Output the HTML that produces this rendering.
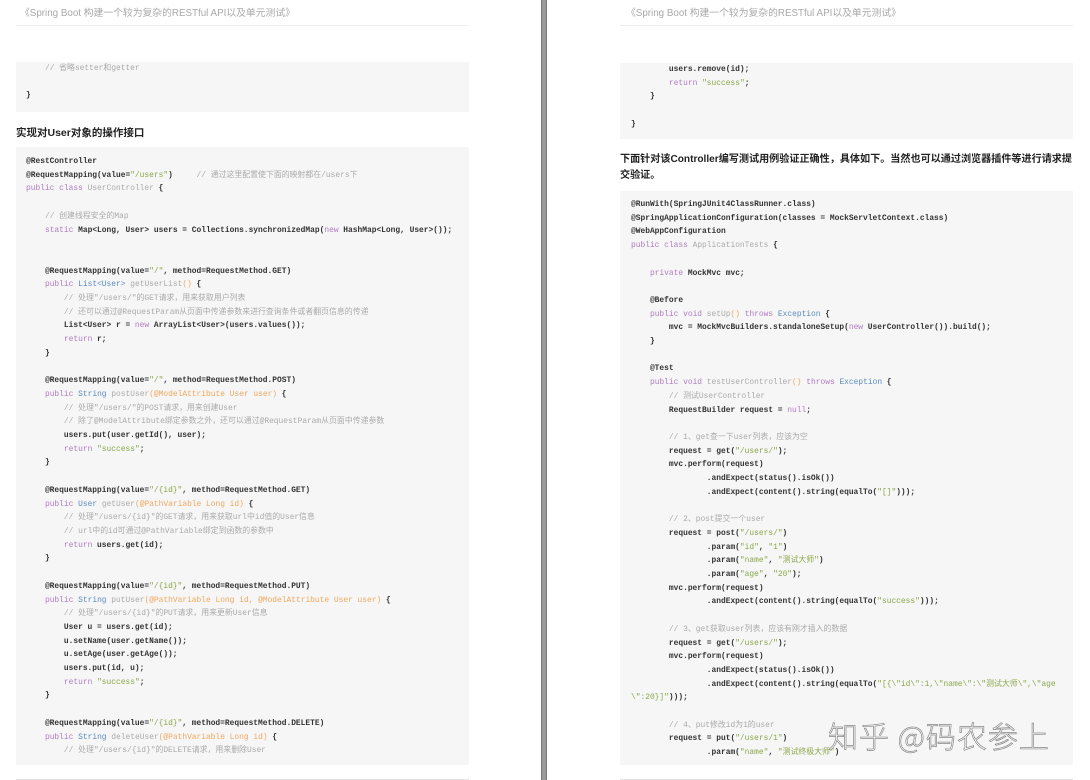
<!DOCTYPE html>
<html><head><meta charset="utf-8"><style>
*{margin:0;padding:0;box-sizing:border-box}
body{width:1090px;height:780px;background:#fff;position:relative;overflow:hidden;font-family:"Liberation Sans","Noto Sans CJK SC",sans-serif}
.hdr{position:absolute;top:5px;font-size:9.8px;color:#a8a8a8;white-space:nowrap}
.hl{position:absolute;top:25px;height:1px;background:#eee;width:453px}
.blk{position:absolute;background:#f6f6f6;width:453px}
pre{font-family:"Liberation Mono","Noto Sans CJK SC",monospace;font-size:7.9px;line-height:13.7px;color:#333;font-weight:bold;white-space:pre}
.k{color:#b07cc0;font-weight:normal}
.s{color:#8aa84a;font-weight:normal}
.c{color:#aaa;font-weight:normal}
.o{color:#f0a860;font-weight:normal}
.t{color:#5a8cc0;font-weight:normal}
.f{color:#aaa;font-weight:normal}
.div{position:absolute;left:541px;top:0;width:6px;height:780px;background:#9a9a9a;border-left:1px solid #777;border-right:1px solid #777}
.txt{position:absolute;font-size:10.5px;color:#222;line-height:16px;font-weight:bold;white-space:nowrap}
.bl{position:absolute;top:779px;height:1px;background:#e4e4e4;width:453px}
.wm{position:absolute;left:828px;top:713px;font-size:30px;color:#fff;-webkit-text-stroke:0.7px #888;letter-spacing:1px;white-space:nowrap;font-family:"Noto Sans CJK SC",sans-serif;font-weight:300}
</style></head><body>

<div class="hdr" style="left:20px">《Spring Boot 构建一个较为复杂的RESTful API以及单元测试》</div>
<div class="hl" style="left:16px"></div>
<div class="hdr" style="left:626px">《Spring Boot 构建一个较为复杂的RESTful API以及单元测试》</div>
<div class="hl" style="left:620px"></div>

<div class="div"></div>

<div class="blk" style="left:16px;top:62px;height:50px"><pre style="padding-left:10px">    <span class="c">// 省略setter和getter</span>

}</pre></div>

<div class="txt" style="left:16px;top:125px">实现对User对象的操作接口</div>

<div class="blk" style="left:16px;top:147px;height:618px"><pre style="padding:8px 0 0 10px">@RestController
@RequestMapping(value=<span class="s">"/users"</span>)     <span class="c">// 通过这里配置使下面的映射都在/users下</span>
<span class="k">public class</span> <span class="f">UserController</span> {

    <span class="c">// 创建线程安全的Map</span>
    <span class="k">static</span> Map&lt;Long, User&gt; users = Collections.synchronizedMap(<span class="k">new</span> HashMap&lt;Long, User&gt;());


    @RequestMapping(value=<span class="s">"/"</span>, method=RequestMethod.GET)
    <span class="k">public</span> <span class="t">List&lt;User&gt;</span> <span class="f">getUserList</span><span class="o">()</span> {
        <span class="c">// 处理"/users/"的GET请求，用来获取用户列表</span>
        <span class="c">// 还可以通过@RequestParam从页面中传递参数来进行查询条件或者翻页信息的传递</span>
        List&lt;User&gt; r = <span class="k">new</span> ArrayList&lt;User&gt;(users.values());
        <span class="k">return</span> r;
    }

    @RequestMapping(value=<span class="s">"/"</span>, method=RequestMethod.POST)
    <span class="k">public</span> <span class="t">String</span> <span class="f">postUser</span><span class="o">(@ModelAttribute User user)</span> {
        <span class="c">// 处理"/users/"的POST请求，用来创建User</span>
        <span class="c">// 除了@ModelAttribute绑定参数之外，还可以通过@RequestParam从页面中传递参数</span>
        users.put(user.getId(), user);
        <span class="k">return</span> <span class="s">"success"</span>;
    }

    @RequestMapping(value=<span class="s">"/{id}"</span>, method=RequestMethod.GET)
    <span class="k">public</span> <span class="t">User</span> <span class="f">getUser</span><span class="o">(@PathVariable Long id)</span> {
        <span class="c">// 处理"/users/{id}"的GET请求，用来获取url中id值的User信息</span>
        <span class="c">// url中的id可通过@PathVariable绑定到函数的参数中</span>
        <span class="k">return</span> users.get(id);
    }

    @RequestMapping(value=<span class="s">"/{id}"</span>, method=RequestMethod.PUT)
    <span class="k">public</span> <span class="t">String</span> <span class="f">putUser</span><span class="o">(@PathVariable Long id, @ModelAttribute User user)</span> {
        <span class="c">// 处理"/users/{id}"的PUT请求，用来更新User信息</span>
        User u = users.get(id);
        u.setName(user.getName());
        u.setAge(user.getAge());
        users.put(id, u);
        <span class="k">return</span> <span class="s">"success"</span>;
    }

    @RequestMapping(value=<span class="s">"/{id}"</span>, method=RequestMethod.DELETE)
    <span class="k">public</span> <span class="t">String</span> <span class="f">deleteUser</span><span class="o">(@PathVariable Long id)</span> {
        <span class="c">// 处理"/users/{id}"的DELETE请求，用来删除User</span></pre></div>
<div class="bl" style="left:16px"></div>

<div class="blk" style="left:620px;top:63px;height:76px"><pre style="padding:0 0 0 11px">        users.remove(id);
        <span class="k">return</span> <span class="s">"success"</span>;
    }

}</pre></div>

<div class="txt" style="left:620px;top:152px;font-size:10.1px">下面针对该Controller编写测试用例验证正确性，具体如下。当然也可以通过浏览器插件等进行请求提<br>交验证。</div>

<div class="blk" style="left:620px;top:191px;height:574px"><pre style="padding:7px 0 0 11px">@RunWith(SpringJUnit4ClassRunner.class)
@SpringApplicationConfiguration(classes = MockServletContext.class)
@WebAppConfiguration
<span class="k">public class</span> <span class="f">ApplicationTests</span> {

    <span class="k">private</span> MockMvc mvc;

    @Before
    <span class="k">public void</span> <span class="f">setUp</span><span class="o">()</span> <span class="k">throws</span> <span class="t">Exception</span> {
        mvc = MockMvcBuilders.standaloneSetup(<span class="k">new</span> UserController()).build();
    }

    @Test
    <span class="k">public void</span> <span class="f">testUserController</span><span class="o">()</span> <span class="k">throws</span> <span class="t">Exception</span> {
        <span class="c">// 测试UserController</span>
        RequestBuilder request = <span class="k">null</span>;

        <span class="c">// 1、get查一下user列表，应该为空</span>
        request = get(<span class="s">"/users/"</span>);
        mvc.perform(request)
                .andExpect(status().isOk())
                .andExpect(content().string(equalTo(<span class="s">"[]"</span>)));

        <span class="c">// 2、post提交一个user</span>
        request = post(<span class="s">"/users/"</span>)
                .param(<span class="s">"id"</span>, <span class="s">"1"</span>)
                .param(<span class="s">"name"</span>, <span class="s">"测试大师"</span>)
                .param(<span class="s">"age"</span>, <span class="s">"20"</span>);
        mvc.perform(request)
                .andExpect(content().string(equalTo(<span class="s">"success"</span>)));

        <span class="c">// 3、get获取user列表，应该有刚才插入的数据</span>
        request = get(<span class="s">"/users/"</span>);
        mvc.perform(request)
                .andExpect(status().isOk())
                .andExpect(content().string(equalTo(<span class="s">"[{\"id\":1,\"name\":\"测试大师\",\"age</span>
<span class="s">\":20}]"</span>)));

        <span class="c">// 4、put修改id为1的user</span>
        request = put(<span class="s">"/users/1"</span>)
                .param(<span class="s">"name"</span>, <span class="s">"测试终极大师"</span>)</pre></div>
<div class="bl" style="left:620px"></div>

<div class="wm">知乎 @码农参上</div>
</body></html>
